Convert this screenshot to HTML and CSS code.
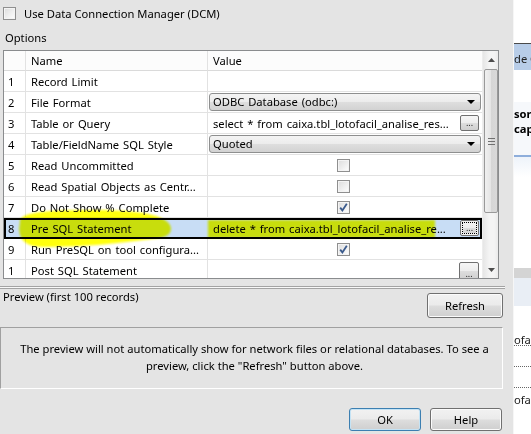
FILE: index.html
```html
<!DOCTYPE html>
<html>
<head>
<meta charset="utf-8">
<link rel="stylesheet" href="styles.css">
</head>
<body>
<div class="screen">
  <div class="dialog">
    <div class="dcm">
      <span class="cb"></span>
      <span class="dcm-label">Use Data Connection Manager (DCM)</span>
    </div>
    <div class="section-label">Options</div>
    <div class="grid">
      <div class="table">
        <div class="row head"><div class="c num"></div><div class="c name">Name</div><div class="c val">Value</div></div>
        <div class="row"><div class="c num">1</div><div class="c name">Record Limit</div><div class="c val"></div></div>
        <div class="row"><div class="c num">2</div><div class="c name">File Format</div><div class="c val"><div class="combo"><span>ODBC Database (odbc:)</span><span class="arrow"></span></div></div></div>
        <div class="row"><div class="c num">3</div><div class="c name">Table or Query</div><div class="c val text"><span class="vtext">select * from caixa.tbl_lotofacil_analise_res...</span><span class="dots">...</span></div></div>
        <div class="row"><div class="c num">4</div><div class="c name">Table/FieldName SQL Style</div><div class="c val"><div class="combo"><span>Quoted</span><span class="arrow"></span></div></div></div>
        <div class="row"><div class="c num">5</div><div class="c name">Read Uncommitted</div><div class="c val center"><span class="gcb"></span></div></div>
        <div class="row"><div class="c num">6</div><div class="c name">Read Spatial Objects as Centr...</div><div class="c val center"><span class="gcb"></span></div></div>
        <div class="row"><div class="c num">7</div><div class="c name">Do Not Show % Complete</div><div class="c val center"><span class="gcb checked"><svg viewBox="0 0 11 11" width="11" height="11"><path d="M2.2 5.6 L4.4 8.4 L8.8 1.8" fill="none" stroke="#3a5a8c" stroke-width="1.8"/></svg></span></div></div>
        <div class="row sel"><div class="c num">8</div><div class="c name">Pre SQL Statement</div><div class="c val text"><span class="vtext">delete * from caixa.tbl_lotofacil_analise_re...</span><span class="dots focus">...</span></div></div>
        <div class="row"><div class="c num">9</div><div class="c name">Run PreSQL on tool configura...</div><div class="c val center"><span class="gcb checked"><svg viewBox="0 0 11 11" width="11" height="11"><path d="M2.2 5.6 L4.4 8.4 L8.8 1.8" fill="none" stroke="#3a5a8c" stroke-width="1.8"/></svg></span></div></div>
        <div class="row"><div class="c num">1</div><div class="c name">Post SQL Statement</div><div class="c val text"><span class="vtext"></span><span class="dots tall">...</span></div></div>
      </div>
      <div class="vscroll">
        <div class="sb-arrow"><svg viewBox="0 0 7 4" width="7" height="4"><path d="M0 4 L3.5 0 L7 4 Z" fill="#4d4d4d"/></svg></div>
        <div class="sb-track">
          <div class="thumb"><span class="grip"></span></div>
        </div>
        <div class="sb-arrow"><svg viewBox="0 0 7 4" width="7" height="4"><path d="M0 0 L3.5 4 L7 0 Z" fill="#4d4d4d"/></svg></div>
      </div>
    </div>
    <div class="splitter"></div>
    <div class="preview-head">
      <span>Preview (first 100 records)</span>
      <span class="btn refresh">Refresh</span>
    </div>
    <div class="preview-box">
      The preview will not automatically show for network files or relational databases. To see a<br>preview, click the "Refresh" button above.
    </div>
    <div class="actions">
      <span class="btn default">OK</span>
      <span class="btn">Help</span>
    </div>
    <svg class="marker" width="480" height="60" viewBox="0 0 480 60">
      <defs><filter id="soft"><feGaussianBlur stdDeviation="1.2"/></filter></defs>
      <path filter="url(#soft)" d="M20 23 C18 13 40 10 90 10 C128 10 150 12 163 19 C175 25 173 36 160 38 C128 42 92 47 42 47 C23 47 17 36 20 23 Z" fill="#ffff10"/>
      <rect filter="url(#soft)" x="208" y="20" width="227" height="18" fill="#ffff10"/>
    </svg>
  </div>
  <div class="side">
    <div class="s-top"></div>
    <div class="s-head">de Co</div>
    <div class="s-white"></div>
    <div class="s-bold"><div>sor</div><div>cap</div></div>
    <div class="s-line"></div>
    <div class="s-mid"></div>
    <div class="s-gray"></div>
    <div class="s-pale"></div>
    <div class="s-list">
      <div class="s-item first">ofa</div>
      <div class="s-item"></div>
      <div class="s-item"></div>
      <div class="s-item last">ofac</div>
    </div>
  </div>
</div>
</body>
</html>
```
FILE: styles.css
```css
html, body {
  margin: 0;
  padding: 0;
}
body {
  width: 531px;
  height: 434px;
  overflow: hidden;
  background: #e4e4e4;
  font-family: "Noto Sans", "DejaVu Sans", sans-serif;
  font-size: 11.2px;
  color: #000;
}
.screen {
  display: flex;
  height: 434px;
}
.dialog {
  width: 513px;
  flex: none;
  display: flex;
  flex-direction: column;
  position: relative;
}
.dcm {
  display: flex;
  align-items: center;
  gap: 8px;
  height: 14px;
  margin-top: 6px;
  padding-left: 3px;
}
.cb, .gcb {
  width: 11px;
  height: 11px;
  border: 1px solid #8f8f8f;
  background: linear-gradient(135deg, #dcdcdc, #ffffff);
  box-shadow: inset 0 0 0 1px #f4f4f4;
  display: inline-flex;
  align-items: center;
  justify-content: center;
  flex: none;
}
.section-label {
  margin-top: 10px;
  padding-left: 5px;
  line-height: 16px;
}
.grid {
  margin-top: 4px;
  margin-left: 3px;
  width: 494px;
  height: 227px;
  border: 1px solid #8a8c8e;
  background: #fff;
  display: flex;
  overflow: hidden;
}
.table {
  width: 478px;
  flex: none;
  display: flex;
  flex-direction: column;
}
.row {
  display: grid;
  grid-template-columns: 22px 182px 274px;
  height: 21px;
  flex: none;
}
.row.head {
  height: 20px;
  background: #fcfcfc;
}
.c {
  box-sizing: border-box;
  border-right: 1px solid #e2e2e2;
  border-bottom: 1px solid #e2e2e2;
  line-height: 19px;
  padding-top: 1px;
  white-space: nowrap;
  overflow: hidden;
  word-spacing: 1px;
}
.row.head .c {
  border-bottom-color: #dadada;
  line-height: 19px;
  padding-top: 0;
}
.c.num {
  padding-left: 4px;
}
.c.name {
  padding-left: 5px;
}
.c.val {
  padding-left: 5px;
  border-right: none;
}
.c.val.center {
  display: flex;
  align-items: center;
  justify-content: center;
  padding-left: 0;
  padding-right: 4px;
  padding-top: 0;
}
.c.val.text {
  display: flex;
  align-items: center;
  justify-content: space-between;
  padding-right: 3px;
  padding-top: 0;
}
.c.val .combo {
  margin-top: 0;
}
.combo {
  margin: 0 0 0 -4px;
  height: 18px;
  width: 272px;
  box-sizing: border-box;
  border: 1px solid #8e8f8f;
  border-radius: 3px;
  background: linear-gradient(#f4f4f4, #ececec 48%, #dedede 52%, #d2d2d2);
  display: flex;
  align-items: center;
  justify-content: space-between;
  padding: 0 5px 0 3px;
  line-height: 16px;
}
.arrow {
  width: 0;
  height: 0;
  border-left: 4px solid transparent;
  border-right: 4px solid transparent;
  border-top: 4px solid #000;
}
.dots {
  width: 19px;
  height: 16px;
  box-sizing: border-box;
  border: 1px solid #707070;
  border-radius: 2px;
  background: linear-gradient(#f6f6f6, #ededed 48%, #dddddd 52%, #d0d0d0);
  font-size: 9px;
  line-height: 14px;
  text-align: center;
  flex: none;
  color: #222;
}
.dots.focus {
  box-shadow: inset 0 0 0 2px #f0f0f0;
  outline: 1px dotted #000;
  outline-offset: -3px;
}
.dots.tall {
  height: 18px;
  margin-top: 2px;
  align-self: flex-start;
  line-height: 22px;
  width: 20px;
}
.row.sel {
  background: #c8ddf5;
  outline: 2px solid #000;
  outline-offset: -2px;
}
.row.sel .c {
  border-color: #c8ddf5;
}
.vscroll {
  width: 16px;
  flex: none;
  display: flex;
  flex-direction: column;
  background: linear-gradient(90deg, #e6e6e6, #f4f4f4 40%, #f4f4f4 70%, #e8e8e8);
  border-left: 1px solid #ededed;
}
.sb-arrow {
  height: 17px;
  display: flex;
  align-items: center;
  justify-content: center;
  flex: none;
}
.sb-track {
  flex: 1;
  padding: 1px 0;
}
.thumb {
  margin: 0 1px;
  height: 144px;
  box-sizing: border-box;
  border: 1px solid #999;
  border-radius: 2px;
  background: linear-gradient(90deg, #f0f0f0, #e4e4e4 50%, #d6d6d6 51%, #d9d9d9);
  display: flex;
  align-items: center;
  justify-content: center;
}
.grip {
  width: 7px;
  height: 5px;
  border-top: 1px solid #707070;
  border-bottom: 1px solid #707070;
  position: relative;
}
.grip::after {
  content: "";
  position: absolute;
  left: 0;
  right: 0;
  top: 2px;
  border-top: 1px solid #707070;
}
.splitter {
  margin-top: 7px;
  width: 505px;
  height: 1px;
  border-top: 1px solid #a3a3a3;
  border-bottom: 1px solid #a3a3a3;
  background: #f8f8f8;
}
.preview-head {
  width: 503px;
  display: flex;
  justify-content: space-between;
  align-items: flex-start;
  padding-left: 3px;
  box-sizing: border-box;
}
.preview-head > span:first-child {
  line-height: 14px;
  margin-top: 1px;
}
.btn {
  box-sizing: border-box;
  border: 1px solid #707070;
  border-radius: 3px;
  background: linear-gradient(#f2f2f2, #ebebeb 48%, #dddddd 52%, #cfcfcf);
  box-shadow: inset 0 0 0 1px #fbfbfb;
  display: flex;
  align-items: center;
  justify-content: center;
}
.refresh {
  width: 76px;
  height: 25px;
  margin-top: 4px;
}
.preview-box {
  margin-top: 9px;
  width: 503px;
  height: 62px;
  box-sizing: border-box;
  border-top: 1px solid #a0a0a0;
  border-left: 1px solid #a0a0a0;
  border-right: 1px solid #ffffff;
  border-bottom: 1px solid #ffffff;
  text-align: center;
  padding-top: 12px;
  padding-left: 6px;
  line-height: 17px;
}
.actions {
  margin-top: 19px;
  width: 502px;
  display: flex;
  justify-content: flex-end;
  gap: 9px;
}
.actions .btn {
  width: 72px;
  height: 23px;
}
.btn.default {
  border-color: #3c7fb1;
  box-shadow: inset 0 0 0 1px #c4e3f5;
}
.marker {
  position: absolute;
  left: 0;
  top: 200px;
  mix-blend-mode: multiply;
  pointer-events: none;
}
.side {
  flex: 1;
  display: flex;
  flex-direction: column;
  border-left: 1px solid #f6f6f6;
  overflow: hidden;
  background: #fff;
}
.s-top {
  height: 43px;
  background: #fff;
  border-bottom: 1px solid #4a4a4a;
  flex: none;
}
.s-head {
  height: 26px;
  background: #b8cde8;
  line-height: 30px;
  white-space: nowrap;
  color: #222;
  flex: none;
}
.s-white {
  height: 32px;
  flex: none;
}
.s-bold {
  height: 53px;
  background: #f6f8fb;
  font-weight: bold;
  line-height: 15px;
  padding-top: 4px;
  box-sizing: border-box;
  white-space: nowrap;
  flex: none;
}
.s-line {
  height: 2px;
  background: #8eaedb;
  flex: none;
}
.s-mid {
  height: 111px;
  background: linear-gradient(#eef3fa, #ffffff 20px);
  flex: none;
}
.s-gray {
  height: 10px;
  background: #d4d4d4;
  flex: none;
}
.s-pale {
  height: 28px;
  background: #e9eef5;
  flex: none;
}
.s-list {
  flex: 1;
  padding-top: 26px;
}
.s-item {
  height: 20px;
  border-bottom: 1px dotted #666;
  line-height: 16px;
  white-space: nowrap;
  color: #222;
}
.s-item.first {
  height: 13px;
}
.s-item.last {
  border-bottom: none;
  line-height: 24px;
}
```
